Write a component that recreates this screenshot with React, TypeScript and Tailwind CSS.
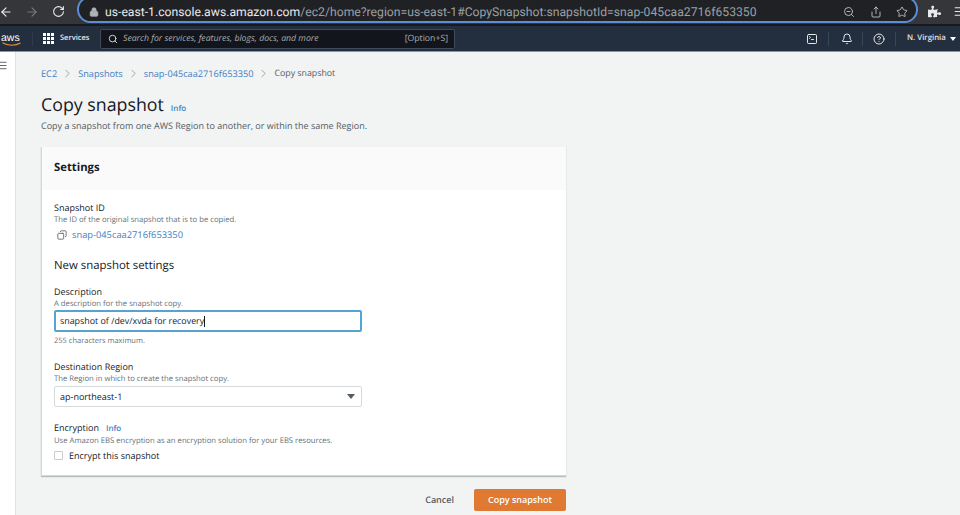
import { ArrowLeft, ArrowRight, RotateCw, Lock, Search, ZoomOut, Share, Star, ChevronRight, Bell, CircleHelp, Copy, SquareTerminal, Menu } from 'lucide-react';
import { FaPuzzlePiece } from 'react-icons/fa';

function Crumb({ label }: { label: string }) {
  return (
    <>
      <span className="text-[#3f81c4]">{label}</span>
      <ChevronRight className="mx-[4px] h-[13px] w-[13px] text-[#8d9699]" strokeWidth={1.5} />
    </>
  );
}

function FieldLabel({ title, hint }: { title: string; hint: string }) {
  return (
    <>
      <div className="text-[9px] leading-[13px] text-[#16191f]">{title}</div>
      <div className="mt-[1px] text-[7.7px] leading-[11px] text-[#687078]">{hint}</div>
    </>
  );
}

function NavDivider() {
  return <div className="h-[14px] w-px bg-[#3a4656]" />;
}

function ServicesGrid() {
  const cells = [0, 4, 8];
  return (
    <svg viewBox="0 0 11 11" className="ml-[10px] h-[11px] w-[11px]">
      {cells.map((y) => cells.map((x) => <rect key={`${x}-${y}`} x={x} y={y} width="3" height="3" fill="#fff" />))}
    </svg>
  );
}

export default function App() {
  return (
    <div className="flex h-[515px] w-[960px] flex-col overflow-hidden bg-[#f2f3f3] font-['Open_Sans','Noto_Sans',sans-serif] [text-rendering:geometricPrecision]">
      {/* browser chrome */}
      <div className="flex h-[24px] shrink-0 items-start overflow-hidden bg-[#35363a] pt-[5px]">
        <ArrowLeft className="ml-[-1px] h-[14px] w-[14px] shrink-0 text-[#e8eaed]" strokeWidth={2} />
        <ArrowRight className="ml-[12px] h-[14px] w-[14px] shrink-0 text-[#75777b]" strokeWidth={2} />
        <RotateCw className="ml-[13px] h-[13px] w-[13px] shrink-0 text-[#e8eaed]" strokeWidth={2} />
        <div className="ml-[12px] -mt-[9px] flex h-[27px] w-[841px] shrink-0 items-center rounded-[14px] border-2 border-[#5b8ed6] bg-[#202124] pl-[10px] pr-[8px] pt-[5px] font-['Roboto',sans-serif] text-[12.2px]">
          <Lock className="h-[10px] w-[10px] text-[#b0b2b6]" fill="#b0b2b6" strokeWidth={2} />
          <span className="ml-[6px] text-[#e8eaed]">us-east-1.console.aws.amazon.com</span>
          <span className="text-[#9aa0a6]">/ec2/home?region=us-east-1#CopySnapshot:snapshotId=snap-045caa2716f653350</span>
          <ZoomOut className="ml-auto h-[12px] w-[12px] text-[#c4c7cb]" strokeWidth={1.75} />
          <Share className="ml-[15px] h-[12px] w-[12px] text-[#c4c7cb]" strokeWidth={1.75} />
          <Star className="ml-[14px] h-[12px] w-[12px] text-[#c4c7cb]" strokeWidth={1.75} />
        </div>
        <FaPuzzlePiece className="ml-[10px] h-[13px] w-[13px] shrink-0 text-[#e8eaed]" />
        <Menu className="ml-[12px] h-[13px] w-[13px] shrink-0 text-[#e8eaed]" strokeWidth={2} />
      </div>
      <div className="h-[2px] shrink-0 bg-[#17191c]" />

      {/* aws nav */}
      <div className="flex h-[26px] shrink-0 items-center border-b border-[#8e959c] bg-[#232f3e] text-white">
        <div className="relative -mt-[2px] ml-[1px] w-[20px] font-['Liberation_Sans',sans-serif] text-[10.5px] leading-[10px]">
          aws
          <svg viewBox="0 0 20 5" className="absolute left-0 top-[9px] h-[5px] w-[21px]">
            <path d="M1 0.8C6 4 14 4 19 1" stroke="#ec912d" strokeWidth="1.1" fill="none" />
          </svg>
        </div>
        <div className="ml-[11px] h-[14px] w-px bg-[#2f3b4b]" />
        <ServicesGrid />
        <span className="ml-[6px] w-[30px] text-[7.5px] font-semibold text-[#e4e6e8]">Services</span>
        <div className="ml-[10px] flex h-[20px] w-[355px] items-center rounded-[2px] border border-[#414c59] bg-[#12161c] pl-[7px] pr-[6px] text-[8.7px] italic text-[#a9adb1]">
          <Search className="h-[10px] w-[10px] text-[#eceded]" strokeWidth={2} />
          <span className="ml-[5px]">Search for services, features, blogs, docs, and more</span>
          <span className="ml-auto not-italic">[Option+S]</span>
        </div>
        <SquareTerminal className="ml-[351px] h-[12px] w-[12px] text-white" strokeWidth={1.75} />
        <div className="ml-[10px]"><NavDivider /></div>
        <Bell className="ml-[12px] h-[12px] w-[12px] text-white" strokeWidth={1.75} />
        <div className="ml-[9px]"><NavDivider /></div>
        <CircleHelp className="ml-[10px] h-[12px] w-[12px] text-white" strokeWidth={1.75} />
        <div className="ml-[10px]"><NavDivider /></div>
        <span className="ml-[11px] text-[7.8px] font-semibold text-[#e4e6e8]">N. Virginia</span>
        <span className="ml-[4px] h-0 w-0 border-x-[3px] border-t-[4px] border-x-transparent border-t-white" />
      </div>

      <div className="flex min-h-0 flex-1">
        {/* collapsed side nav */}
        <div className="w-[16px] shrink-0 border-r border-[#dfe1e2] bg-white">
          <Menu className="-ml-[3px] mt-[8px] h-[11px] w-[11px] text-[#545b64]" strokeWidth={2} />
        </div>

        <div className="w-[550px] pl-[25px]">
          {/* breadcrumbs */}
          <div className="mt-[15px] flex h-[13px] items-center text-[9.2px] text-[#545b64]">
            <Crumb label="EC2" />
            <Crumb label="Snapshots" />
            <Crumb label="snap-045caa2716f653350" />
            <span className="text-[8.8px]">Copy snapshot</span>
          </div>

          <div className="mt-[12px] flex items-baseline">
            <h1 className="text-[17.8px] leading-[26px] text-[#16191f]">Copy snapshot</h1>
            <span className="ml-[7px] text-[8px] font-semibold text-[#3f81c4]">Info</span>
          </div>
          <p className="mt-[2px] text-[9px] leading-[12px] text-[#545b64]">Copy a snapshot from one AWS Region to another, or within the same Region.</p>

          {/* settings card */}
          <div className="mt-[15px] h-[329px] w-[525px] border-b border-l border-[#d5d8d9] bg-white shadow-[0_1px_1px_rgba(0,28,36,0.25)]">
            <div className="flex h-[43px] items-center bg-[#fafafa] pl-[12px] text-[11.3px] font-bold text-[#16191f]">Settings</div>
            <div className="pl-[12px]">
              <div className="mt-[11px]">
                <FieldLabel title="Snapshot ID" hint="The ID of the original snapshot that is to be copied." />
              </div>
              <div className="ml-[3px] mt-[2px] flex h-[14px] items-center text-[9.3px] text-[#3f81c4]">
                <Copy className="h-[10px] w-[10px] -scale-x-100 text-[#545b64]" strokeWidth={2} />
                <span className="ml-[5px]">snap-045caa2716f653350</span>
              </div>

              <div className="mt-[16px] text-[11.4px] font-medium leading-[16px] text-[#16191f]">New snapshot settings</div>

              <div className="mt-[11px]">
                <FieldLabel title="Description" hint="A description for the snapshot copy." />
              </div>
              <div className="flex h-[22px] w-[308px] items-center rounded-[2px] border-2 border-[#56a3d1] pl-[4px] text-[8.9px] text-[#16191f]">
                snapshot of /dev/xvda for recovery
                <span className="h-[11px] w-px bg-[#16191f]" />
              </div>
              <div className="mt-[4px] text-[7.5px] leading-[11px] text-[#687078]">255 characters maximum.</div>

              <div className="mt-[13px]">
                <FieldLabel title="Destination Region" hint="The Region in which to create the snapshot copy." />
              </div>
              <div className="mt-[1px] flex h-[21px] w-[308px] items-center justify-between rounded-[2px] border border-[#d5dbdb] pl-[5px] pr-[6px] text-[9px] text-[#16191f]">
                ap-northeast-1
                <span className="h-0 w-0 border-x-[4px] border-t-[5px] border-x-transparent border-t-[#545b64]" />
              </div>

              <div className="mt-[14px] flex items-baseline">
                <span className="text-[9px] leading-[13px] text-[#16191f]">Encryption</span>
                <span className="ml-[7px] text-[8px] font-semibold text-[#3f81c4]">Info</span>
              </div>
              <div className="mt-[1px] text-[7.7px] leading-[11px] text-[#687078]">Use Amazon EBS encryption as an encryption solution for your EBS resources.</div>
              <div className="mt-[2px] flex items-center text-[9px] text-[#16191f]">
                <span className="h-[9px] w-[9px] rounded-[1px] border border-[#c6cbcd]" />
                <span className="ml-[6px]">Encrypt this snapshot</span>
              </div>
            </div>
          </div>

          {/* footer actions */}
          <div className="mt-[13px] flex w-[525px] items-center justify-end">
            <span className="text-[9px] font-semibold text-[#545b64]">Cancel</span>
            <button className="ml-[20px] h-[22px] w-[92px] rounded-[2px] bg-[#e07a33] text-[9px] font-semibold text-white">Copy snapshot</button>
          </div>
        </div>
      </div>
    </div>
  );
}
